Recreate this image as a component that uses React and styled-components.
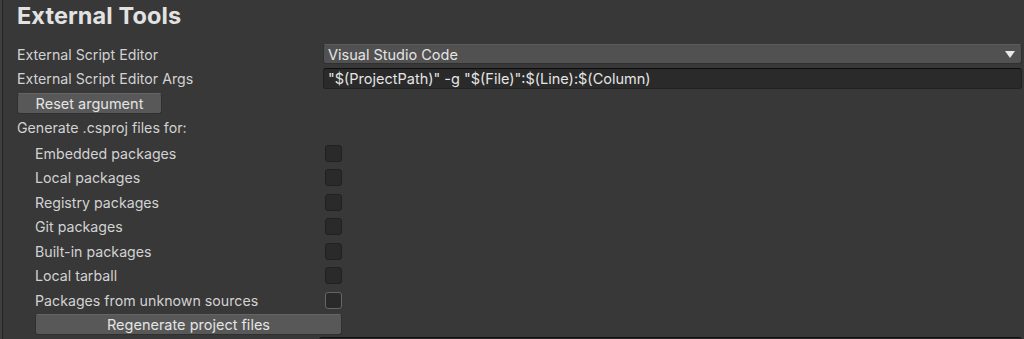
import React from "react";
import styled, { createGlobalStyle } from "styled-components";

const Global = createGlobalStyle`
  html, body { margin: 0; padding: 0; background: #383838; }
  body { font-family: Inter, "Noto Sans", sans-serif; color: #d2d2d2; }
`;

const Panel = styled.div`
  width: 1024px;
  height: 339px;
  overflow: hidden;
  box-sizing: border-box;
  background: #383838;
  border-left: 2px solid #3f3f3f;
  display: flex;
`;

const Divider = styled.div`
  width: 1px;
  background: #232323;
  flex: none;
`;

const Content = styled.div`
  flex: 1;
  display: flex;
  flex-direction: column;
  padding: 0 2px 0 14px;
  & > * { flex: none; }
`;

const Title = styled.h1`
  margin: 0;
  height: 44px;
  line-height: 31px;
  font-size: 23.5px;
  font-weight: 700;
  color: #e2e2e2;
  letter-spacing: 0.1px;
`;

const Row = styled.div`
  display: grid;
  grid-template-columns: ${(p) => (p.$indent ? "288px" : "306px")} 1fr;
  align-items: center;
  height: ${(p) => p.$h || 24}px;
  padding-left: ${(p) => (p.$indent ? 18 : 0)}px;
`;

const Label = styled.span`
  font-size: 14.2px;
  color: #d2d2d2;
  white-space: nowrap;
`;

const Dropdown = styled.div`
  height: 20px;
  box-sizing: border-box;
  background: #515151;
  border: 1px solid #303030;
  border-top-color: #5c5c5c;
  border-radius: 3px;
  display: flex;
  align-items: center;
  justify-content: space-between;
  padding: 0 6px 0 4px;
  font-size: 14.5px;
  color: #e4e4e4;
`;

const Arrow = styled.span`
  width: 0;
  height: 0;
  border-left: 5px solid transparent;
  border-right: 5px solid transparent;
  border-top: 7px solid #e8e8e8;
`;

const TextField = styled.div`
  height: 21px;
  box-sizing: border-box;
  background: #2a2a2a;
  border: 1px solid #212121;
  border-top-color: #0f0f0f;
  border-radius: 3px;
  display: flex;
  align-items: center;
  padding: 0 4px;
  font-size: 14.5px;
  color: #e4e4e4;
  white-space: nowrap;
`;

const Button = styled.button`
  height: 21px;
  width: ${(p) => p.$w}px;
  margin-left: ${(p) => p.$ml || 0}px;
  box-sizing: border-box;
  background: #585858;
  border: 1px solid #303030;
  border-top-color: #656565;
  border-radius: 3px;
  color: #e4e4e4;
  font-family: Inter, "Noto Sans", sans-serif;
  font-size: 14.5px;
  padding: 0;
  display: flex;
  align-items: center;
  justify-content: center;
`;

const ButtonRow = styled.div`
  height: ${(p) => p.$h}px;
  display: flex;
  align-items: center;
`;

const Checkbox = styled.span`
  width: 17px;
  height: 17px;
  box-sizing: border-box;
  background: #2a2a2a;
  border: 1px solid ${(p) => (p.$hover ? "#656565" : "#212121")};
  border-radius: 3px;
  margin-left: 2px;
`;

const NextRow = styled.div`
  display: grid;
  grid-template-columns: 302px 1fr;
  align-items: start;
  height: 21px;
`;

const packages = [
  "Embedded packages",
  "Local packages",
  "Registry packages",
  "Git packages",
  "Built-in packages",
  "Local tarball",
  "Packages from unknown sources",
];

export default function App() {
  return (
    <>
      <Global />
      <Panel>
        <Divider />
        <Content>
          <Title>External Tools</Title>
          <Row $h={20}>
            <Label>External Script Editor</Label>
            <Dropdown>
              <span>Visual Studio Code</span>
              <Arrow />
            </Dropdown>
          </Row>
          <Row $h={29}>
            <Label>External Script Editor Args</Label>
            <TextField>"$(ProjectPath)" -g "$(File)":$(Line):$(Column)</TextField>
          </Row>
          <ButtonRow $h={21}>
            <Button $w={145}>Reset argument</Button>
          </ButtonRow>
          <Row $h={27}>
            <Label>Generate .csproj files for:</Label>
          </Row>
          {packages.map((p, i) => (
            <Row key={p} $indent $h={24.5}>
              <Label>{p}</Label>
              <Checkbox $hover={i === packages.length - 1} />
            </Row>
          ))}
          <ButtonRow $h={24.5}>
            <Button $w={307} $ml={18}>Regenerate project files</Button>
          </ButtonRow>
          <NextRow>
            <span />
            <TextField />
          </NextRow>
        </Content>
      </Panel>
    </>
  );
}
